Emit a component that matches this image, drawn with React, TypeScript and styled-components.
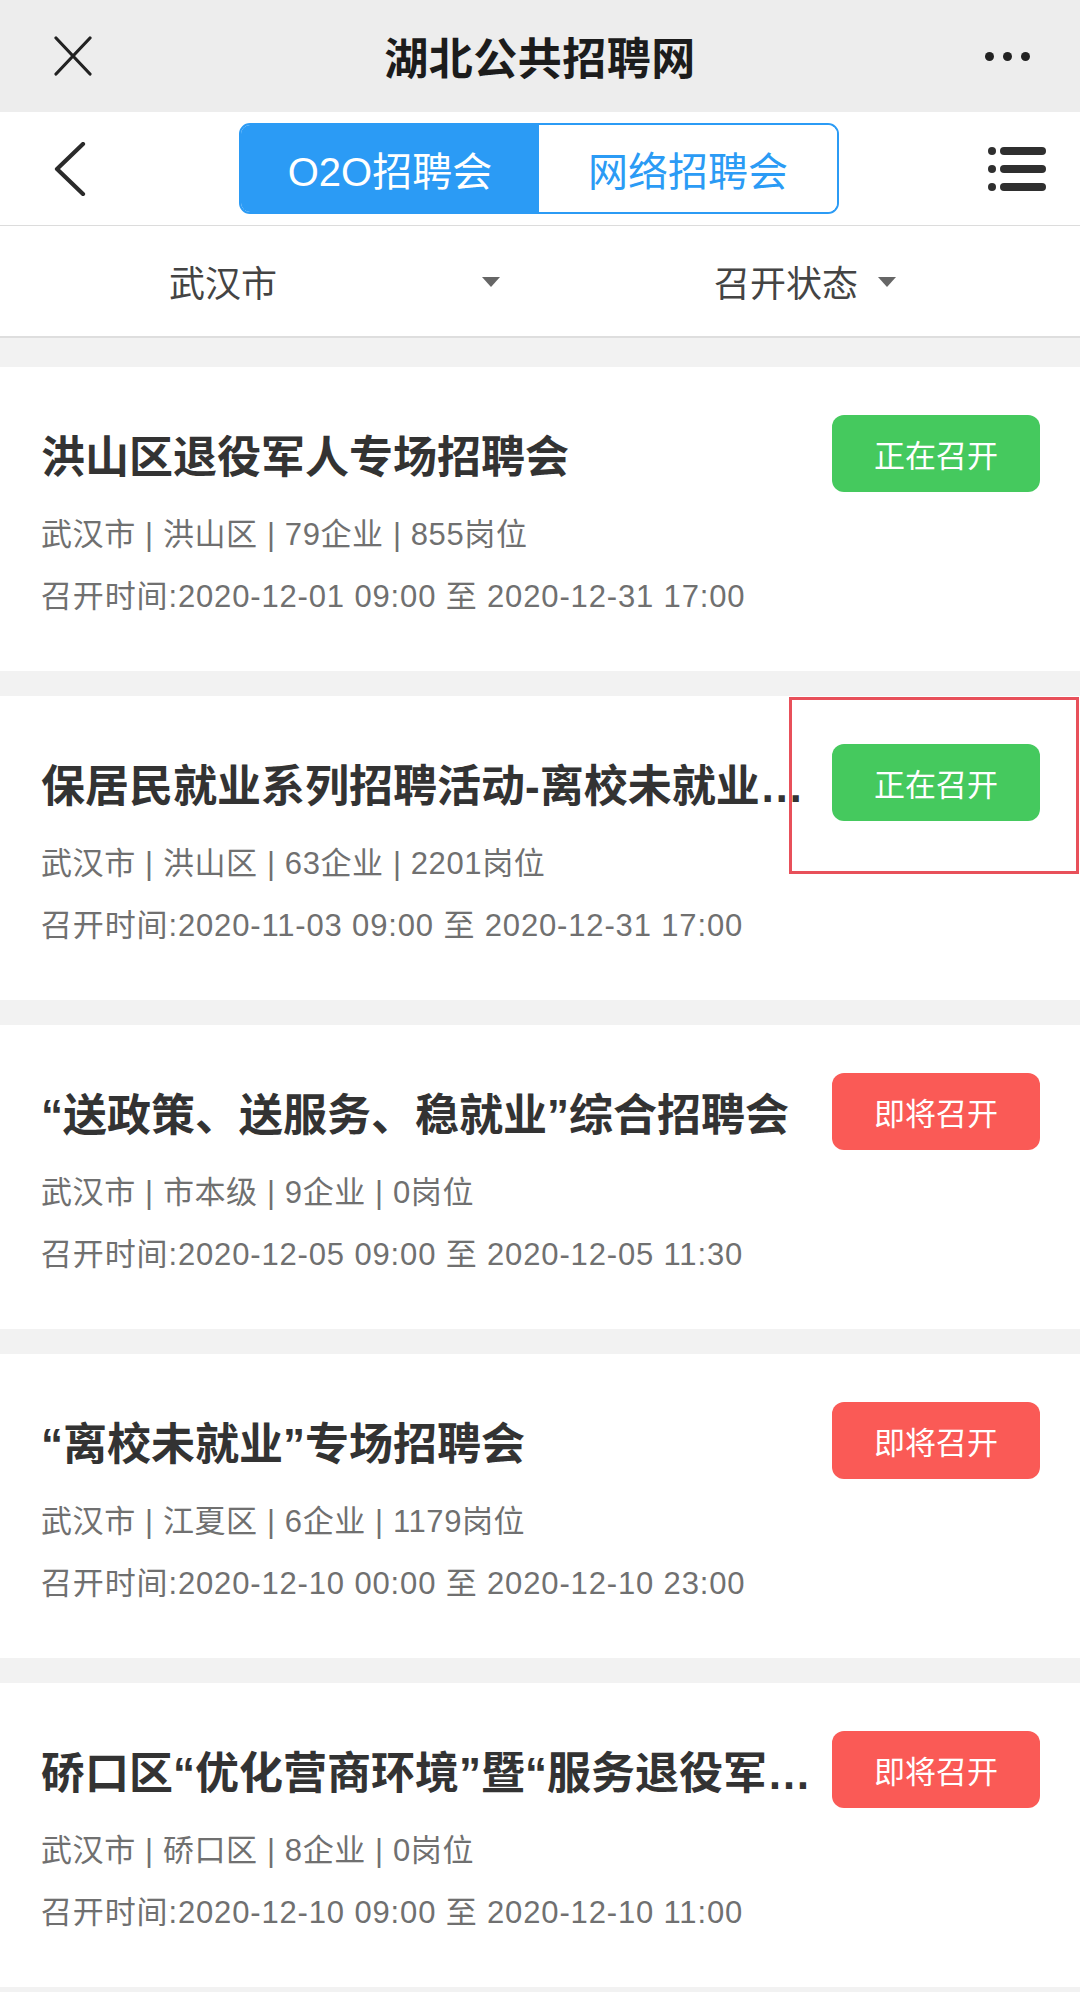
import styled, { createGlobalStyle } from 'styled-components';

type Status = 'open' | 'soon';

interface Fair {
    title: string;
    city: string;
    district: string;
    companies: number;
    jobs: number;
    start: string;
    end: string;
    status: Status;
    marked?: boolean;
}

const fairs: Fair[] = [
    {
        title: '洪山区退役军人专场招聘会',
        city: '武汉市',
        district: '洪山区',
        companies: 79,
        jobs: 855,
        start: '2020-12-01 09:00',
        end: '2020-12-31 17:00',
        status: 'open',
    },
    {
        title: '保居民就业系列招聘活动-离校未就业高校毕业生专场',
        city: '武汉市',
        district: '洪山区',
        companies: 63,
        jobs: 2201,
        start: '2020-11-03 09:00',
        end: '2020-12-31 17:00',
        status: 'open',
        marked: true,
    },
    {
        title: '“送政策、送服务、稳就业”综合招聘会',
        city: '武汉市',
        district: '市本级',
        companies: 9,
        jobs: 0,
        start: '2020-12-05 09:00',
        end: '2020-12-05 11:30',
        status: 'soon',
    },
    {
        title: '“离校未就业”专场招聘会',
        city: '武汉市',
        district: '江夏区',
        companies: 6,
        jobs: 1179,
        start: '2020-12-10 00:00',
        end: '2020-12-10 23:00',
        status: 'soon',
    },
    {
        title: '硚口区“优化营商环境”暨“服务退役军人”专场招聘会',
        city: '武汉市',
        district: '硚口区',
        companies: 8,
        jobs: 0,
        start: '2020-12-10 09:00',
        end: '2020-12-10 11:00',
        status: 'soon',
    },
];

const statusLabel: Record<Status, string> = {
    open: '正在召开',
    soon: '即将召开',
};

const App = () => {
    return (
        <Page>
            <GlobalStyle />

            <TopBar>
                <IconSlot>
                    <svg width="40" height="40" viewBox="0 0 40 40">
                        <path d="M3 2 L37 38 M37 2 L3 38" stroke="#222" strokeWidth="3.2" strokeLinecap="round" />
                    </svg>
                </IconSlot>
                <PageTitle>湖北公共招聘网</PageTitle>
                <IconSlot $right>
                    <Dots>
                        <Dot />
                        <Dot />
                        <Dot />
                    </Dots>
                </IconSlot>
            </TopBar>

            <NavBar>
                <IconSlot>
                    <svg width="34" height="54" viewBox="0 0 34 54">
                        <path d="M30 2 L4 27 L30 52" fill="none" stroke="#2b2b2b" strokeWidth="4.2" strokeLinecap="round" strokeLinejoin="round" />
                    </svg>
                </IconSlot>

                <Segmented>
                    <Segment $active>O2O招聘会</Segment>
                    <Segment>网络招聘会</Segment>
                </Segmented>

                <IconSlot $right>
                    <MenuIcon>
                        {[0, 1, 2].map(i => (
                            <MenuRow key={i}>
                                <MenuDot />
                                <MenuBar />
                            </MenuRow>
                        ))}
                    </MenuIcon>
                </IconSlot>
            </NavBar>

            <FilterBar>
                <FilterItem $spread>
                    <span>武汉市</span>
                    <Caret />
                </FilterItem>
                <FilterItem>
                    <span>召开状态</span>
                    <Caret />
                </FilterItem>
            </FilterBar>

            <List>
                {fairs.map(fair => (
                    <Card key={fair.title}>
                        <TitleRow>
                            <FairTitle>{fair.title}</FairTitle>
                            <StatusButton $status={fair.status}>{statusLabel[fair.status]}</StatusButton>
                        </TitleRow>
                        <Meta>
                            {fair.city} | {fair.district} | {fair.companies}企业 | {fair.jobs}岗位
                        </Meta>
                        <Meta $time>
                            召开时间:{fair.start} 至 {fair.end}
                        </Meta>
                        {fair.marked && <Annotation />}
                    </Card>
                ))}
            </List>
        </Page>
    );
};

export default App;

const GlobalStyle = createGlobalStyle`
    html, body {
        margin: 0;
        padding: 0;
        background: #f2f2f2;
    }

    body {
        font-family: "Liberation Sans", "Noto Sans CJK SC", sans-serif;
    }
`;

const Page = styled.div`
    width: 1080px;
    min-height: 1992px;
    background: #f2f2f2;
`;

const TopBar = styled.div`
    height: 112px;
    background: #ededed;
    display: grid;
    grid-template-columns: 160px 1fr 160px;
    align-items: center;
`;

const IconSlot = styled.div<{ $right?: boolean }>`
    display: flex;
    align-items: center;
    justify-content: ${p => (p.$right ? 'flex-end' : 'flex-start')};
    padding: ${p => (p.$right ? '0 34px 0 0' : '0 0 0 53px')};
`;

const PageTitle = styled.h1`
    margin: 0;
    text-align: center;
    font-size: 44px;
    font-weight: 700;
    color: #1c1c1c;
    letter-spacing: 0.5px;
`;

const Dots = styled.div`
    display: flex;
    gap: 9px;
    padding-right: 16px;
`;

const Dot = styled.span`
    width: 9px;
    height: 9px;
    border-radius: 50%;
    background: #222;
`;

const NavBar = styled.div`
    height: 113px;
    background: #fff;
    border-bottom: 1px solid #dcdcdc;
    display: grid;
    grid-template-columns: 239px 600px 1fr;
    align-items: center;
`;

const Segmented = styled.div`
    height: 91px;
    box-sizing: border-box;
    border: 2px solid #2b9bf5;
    border-radius: 11px;
    overflow: hidden;
    display: grid;
    grid-template-columns: 298px 1fr;
`;

const Segment = styled.div<{ $active?: boolean }>`
    display: flex;
    align-items: center;
    justify-content: center;
    font-size: 40px;
    background: ${p => (p.$active ? '#2b9bf5' : '#fff')};
    color: ${p => (p.$active ? '#fff' : '#2b9bf5')};
`;

const MenuIcon = styled.div`
    display: flex;
    flex-direction: column;
    gap: 10px;
`;

const MenuRow = styled.div`
    display: flex;
    align-items: center;
    gap: 4px;
`;

const MenuDot = styled.span`
    width: 8px;
    height: 8px;
    border-radius: 50%;
    background: #2f2f2f;
`;

const MenuBar = styled.span`
    width: 46px;
    height: 8px;
    border-radius: 4px;
    background: #2f2f2f;
`;

const FilterBar = styled.div`
    height: 110px;
    background: #fff;
    border-bottom: 2px solid #dedede;
    display: grid;
    grid-template-columns: 1fr 1fr;
`;

const FilterItem = styled.div<{ $spread?: boolean }>`
    display: flex;
    align-items: center;
    justify-content: ${p => (p.$spread ? 'space-between' : 'flex-start')};
    gap: 20px;
    padding: ${p => (p.$spread ? '0 40px 0 169px' : '0 0 0 174px')};
    font-size: 36px;
    color: #444;
`;

const Caret = styled.span`
    width: 0;
    height: 0;
    border-left: 9px solid transparent;
    border-right: 9px solid transparent;
    border-top: 10px solid #666;
    margin-top: 2px;
`;

const List = styled.div`
    display: flex;
    flex-direction: column;
    gap: 25px;
    padding-top: 29px;
`;

const Card = styled.div`
    position: relative;
    height: 304px;
    box-sizing: border-box;
    background: #fff;
    padding: 48px 40px 0 41px;
`;

const TitleRow = styled.div`
    height: 77px;
    display: flex;
    align-items: center;
    gap: 10px;
`;

const FairTitle = styled.div`
    flex: 1;
    min-width: 0;
    font-size: 44px;
    font-weight: 700;
    color: #333;
    white-space: nowrap;
    overflow: hidden;
    text-overflow: ellipsis;
`;

const StatusButton = styled.div<{ $status: Status }>`
    flex: none;
    width: 208px;
    height: 77px;
    border-radius: 12px;
    display: flex;
    align-items: center;
    justify-content: center;
    font-size: 31px;
    color: #fff;
    background: ${p => (p.$status === 'open' ? '#45c95e' : '#fa5a56')};
`;

const Meta = styled.div<{ $time?: boolean }>`
    margin-top: ${p => (p.$time ? '18px' : '21px')};
    line-height: 44px;
    font-size: 31px;
    color: #707070;
    letter-spacing: ${p => (p.$time ? '0.85px' : '0.6px')};
    white-space: nowrap;
`;

const Annotation = styled.div`
    position: absolute;
    top: 1px;
    right: 1px;
    width: 290px;
    height: 177px;
    box-sizing: border-box;
    border: 3px solid #e8505a;
`;
